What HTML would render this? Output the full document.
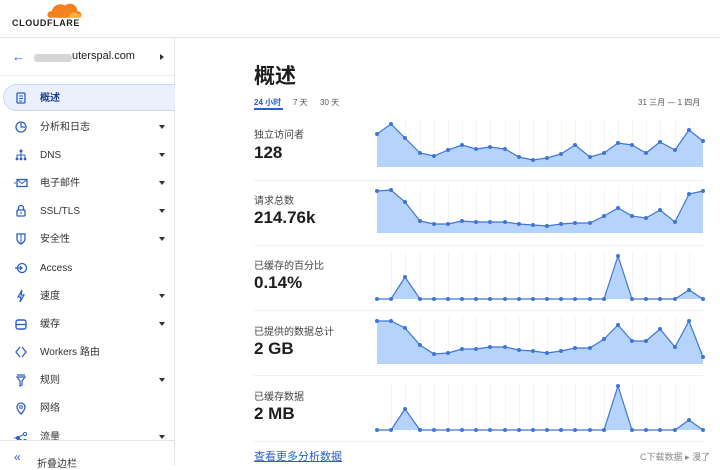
<!DOCTYPE html>
<html><head><meta charset="utf-8"><style>
*{margin:0;padding:0;box-sizing:border-box}
body{width:720px;height:466px;overflow:hidden;background:#fff;font-family:"Liberation Sans","Noto Sans CJK SC",sans-serif;color:#313131;position:relative}
.abs{position:absolute}
.side{position:absolute;left:0;top:38px;width:175px;height:428px;border-right:1px solid #e2e2e2}
.item{position:absolute;left:0;width:174px;height:26px;font-size:10px;line-height:30px;color:#333}
.item .t{position:absolute;left:40px}
.item .ic{position:absolute;left:14px;top:7px;width:14px;height:14px}
.item .ar{position:absolute;left:159px;top:12px;width:0;height:0;border-left:3.5px solid transparent;border-right:3.5px solid transparent;border-top:4px solid #333}
.lbl{position:absolute;left:254px;font-size:10px;color:#444}
.val{position:absolute;left:254px;font-size:17px;font-weight:bold;color:#1d1d1d}
</style></head><body>
<svg class="abs" style="left:44px;top:1px" width="40" height="18" viewBox="0 0 36 16"><path d="M6 15 C2 15 2 9 7 9 C8 4 14 1 19 4 C22 1 30 2 30 9 C34 9 35 15 31 15 Z" fill="#f48120"/><path d="M22 15 C22 11 27 9 30 11 C33 11 34 15 33 15Z" fill="#faad3f"/></svg>
<div class="abs" style="left:12px;top:18px;font-size:9px;font-weight:bold;letter-spacing:0.6px;color:#222">CLOUDFLARE</div>
<div class="abs" style="left:0;top:37px;width:720px;height:1px;background:#e6e6e6"></div>
<div class="side">
  <div class="abs" style="left:12px;top:11px;font-size:13px;color:#2c5ec9">←</div>
  <div class="abs" style="left:34px;top:16px;width:38px;height:8px;background:#d6d6d6;border-radius:3px"></div>
  <div class="abs" style="left:72px;top:12px;font-size:11px;color:#222">uterspal.com</div>
  <div class="abs" style="left:160px;top:16px;border-top:3px solid transparent;border-bottom:3px solid transparent;border-left:4px solid #333"></div>
  <div class="abs" style="left:0;top:37px;width:174px;height:1px;background:#ececec"></div>
</div>
<div class="abs" style="left:3px;top:84px;width:172px;height:27px;background:#eaf1fc;border:1px solid #c9d8f3;border-right:none;border-radius:14px 0 0 14px"></div>
<div class="item" style="top:84px"><svg class="ic" viewBox="0 0 14 14"><rect x="3" y="2" width="8" height="10" rx="1" fill="none" stroke="#2c5ec9" stroke-width="1.3"/><path d="M5 5h4M5 7.5h4M5 10h3" stroke="#2c5ec9"/></svg><span class="t" style="font-weight:bold;color:#1a3f8f">概述</span></div>
<div class="item" style="top:113px"><svg class="ic" viewBox="0 0 14 14"><circle cx="7" cy="7" r="5" fill="none" stroke="#2c5ec9" stroke-width="1.3"/><path d="M7 3v4h4" fill="none" stroke="#2c5ec9" stroke-width="1.3"/></svg><span class="t">分析和日志</span><span class="ar"></span></div>
<div class="item" style="top:141px"><svg class="ic" viewBox="0 0 14 14"><circle cx="7" cy="3" r="1.5" fill="#2c5ec9"/><path d="M7 4v3M3 7h8M3 7v3M7 7v3M11 7v3" stroke="#2c5ec9"/><circle cx="3" cy="11" r="1.4" fill="#2c5ec9"/><circle cx="7" cy="11" r="1.4" fill="#2c5ec9"/><circle cx="11" cy="11" r="1.4" fill="#2c5ec9"/></svg><span class="t">DNS</span><span class="ar"></span></div>
<div class="item" style="top:169px"><svg class="ic" viewBox="0 0 14 14"><rect x="3" y="3.5" width="10" height="7" fill="none" stroke="#2c5ec9" stroke-width="1.3"/><path d="M3 3.5l5 4 5-4" fill="none" stroke="#2c5ec9"/><path d="M0 7h2" stroke="#2c5ec9"/></svg><span class="t">电子邮件</span><span class="ar"></span></div>
<div class="item" style="top:197px"><svg class="ic" viewBox="0 0 14 14"><rect x="3" y="6" width="8" height="6" rx="1" fill="none" stroke="#2c5ec9" stroke-width="1.3"/><path d="M4.5 6V4a2.5 2.5 0 015 0v2" fill="none" stroke="#2c5ec9" stroke-width="1.3"/><circle cx="7" cy="9" r="0.9" fill="#2c5ec9"/></svg><span class="t">SSL/TLS</span><span class="ar"></span></div>
<div class="item" style="top:225px"><svg class="ic" viewBox="0 0 14 14"><path d="M3 2h8v5c0 3-4 5-4 5s-4-2-4-5z" fill="none" stroke="#2c5ec9" stroke-width="1.3"/><path d="M7 2v10" stroke="#2c5ec9"/></svg><span class="t">安全性</span><span class="ar"></span></div>
<div class="item" style="top:254px"><svg class="ic" viewBox="0 0 14 14"><circle cx="8" cy="7" r="4.5" fill="none" stroke="#2c5ec9" stroke-width="1.3"/><path d="M1 7h7M6 5l2 2-2 2" fill="none" stroke="#2c5ec9" stroke-width="1.2"/></svg><span class="t">Access</span></div>
<div class="item" style="top:282px"><svg class="ic" viewBox="0 0 14 14"><path d="M8 1L4 8h3l-1 5 4-7H7z" fill="none" stroke="#2c5ec9" stroke-width="1.2"/></svg><span class="t">速度</span><span class="ar"></span></div>
<div class="item" style="top:310px"><svg class="ic" viewBox="0 0 14 14"><rect x="2" y="3" width="10" height="9" rx="2" fill="none" stroke="#2c5ec9" stroke-width="1.4"/><path d="M2 7.5h10" stroke="#2c5ec9" stroke-width="1.3"/></svg><span class="t">缓存</span><span class="ar"></span></div>
<div class="item" style="top:338px"><svg class="ic" viewBox="0 0 14 14"><path d="M6 2L2 7l4 5M8 2l4 5-4 5" fill="none" stroke="#2c5ec9" stroke-width="1.3"/></svg><span class="t">Workers 路由</span></div>
<div class="item" style="top:366px"><svg class="ic" viewBox="0 0 14 14"><path d="M3 2h8M3 4h8l-3 4v4l-2 1V8z" fill="none" stroke="#2c5ec9" stroke-width="1.2"/></svg><span class="t">规则</span><span class="ar"></span></div>
<div class="item" style="top:394px"><svg class="ic" viewBox="0 0 14 14"><path d="M7 13s-4-4-4-7a4 4 0 018 0c0 3-4 7-4 7z" fill="none" stroke="#2c5ec9" stroke-width="1.3"/><circle cx="7" cy="6" r="1.4" fill="none" stroke="#2c5ec9"/></svg><span class="t">网络</span></div>
<div class="item" style="top:423px"><svg class="ic" viewBox="0 0 14 14"><circle cx="4" cy="8" r="2" fill="#2c5ec9"/><circle cx="11" cy="4" r="1.6" fill="none" stroke="#2c5ec9"/><circle cx="11" cy="11" r="1.6" fill="none" stroke="#2c5ec9"/><path d="M5 7l5-3M5 9l5 2M0 8h2" stroke="#2c5ec9"/></svg><span class="t">流量</span><span class="ar"></span></div>
<div class="abs" style="left:0;top:440px;width:174px;height:26px;background:#fff;border-top:1px solid #e6e6e6"></div>
<div class="abs" style="left:14px;top:450px;font-size:12px;color:#2c5ec9">«</div>
<div class="abs" style="left:37px;top:455px;font-size:10px;color:#333">折叠边栏</div>

<div class="abs" style="left:254px;top:60px;font-size:21px;font-weight:bold;color:#1d1d1d">概述</div>
<div class="abs" style="left:254px;top:97px;font-size:8px;color:#2c5ec9;font-weight:bold">24 小时</div>
<div class="abs" style="left:254px;top:108px;width:29px;height:1.5px;background:#2c5ec9"></div>
<div class="abs" style="left:293px;top:97px;font-size:8px;color:#555">7 天</div>
<div class="abs" style="left:320px;top:97px;font-size:8px;color:#555">30 天</div>
<div class="abs" style="left:638px;top:97px;font-size:8px;color:#555">31 三月 — 1 四月</div>

<div class="lbl" style="top:126px">独立访问者</div><div class="val" style="top:143px">128</div>
<div class="lbl" style="top:192px">请求总数</div><div class="val" style="top:208px">214.76k</div>
<div class="lbl" style="top:257px">已缓存的百分比</div><div class="val" style="top:273px">0.14%</div>
<div class="lbl" style="top:323px">已提供的数据总计</div><div class="val" style="top:339px">2 GB</div>
<div class="lbl" style="top:388px">已缓存数据</div><div class="val" style="top:404px">2 MB</div>

<svg class="abs" style="left:0;top:0" width="720" height="466">
<g stroke="#f0f0f0" stroke-width="1">
<path d="M254 180.5H703M254 245.5H703M254 310.5H703M254 375.5H703M254 441.5H703"/>
</g>
<g stroke="#f2f4f8" stroke-width="1">
<path d="M391.5 120V167M405.5 120V167M420.5 120V167M434.5 120V167M448.5 120V167M462.5 120V167M476.5 120V167M490.5 120V167M505.5 120V167M519.5 120V167M533.5 120V167M547.5 120V167M561.5 120V167M575.5 120V167M590.5 120V167M604.5 120V167M618.5 120V167M632.5 120V167M646.5 120V167M660.5 120V167M675.5 120V167M689.5 120V167"/>
<path d="M391.5 186V233M405.5 186V233M420.5 186V233M434.5 186V233M448.5 186V233M462.5 186V233M476.5 186V233M490.5 186V233M505.5 186V233M519.5 186V233M533.5 186V233M547.5 186V233M561.5 186V233M575.5 186V233M590.5 186V233M604.5 186V233M618.5 186V233M632.5 186V233M646.5 186V233M660.5 186V233M675.5 186V233M689.5 186V233"/>
<path d="M391.5 252V299M405.5 252V299M420.5 252V299M434.5 252V299M448.5 252V299M462.5 252V299M476.5 252V299M490.5 252V299M505.5 252V299M519.5 252V299M533.5 252V299M547.5 252V299M561.5 252V299M575.5 252V299M590.5 252V299M604.5 252V299M618.5 252V299M632.5 252V299M646.5 252V299M660.5 252V299M675.5 252V299M689.5 252V299"/>
<path d="M391.5 317V364M405.5 317V364M420.5 317V364M434.5 317V364M448.5 317V364M462.5 317V364M476.5 317V364M490.5 317V364M505.5 317V364M519.5 317V364M533.5 317V364M547.5 317V364M561.5 317V364M575.5 317V364M590.5 317V364M604.5 317V364M618.5 317V364M632.5 317V364M646.5 317V364M660.5 317V364M675.5 317V364M689.5 317V364"/>
<path d="M391.5 383V430M405.5 383V430M420.5 383V430M434.5 383V430M448.5 383V430M462.5 383V430M476.5 383V430M490.5 383V430M505.5 383V430M519.5 383V430M533.5 383V430M547.5 383V430M561.5 383V430M575.5 383V430M590.5 383V430M604.5 383V430M618.5 383V430M632.5 383V430M646.5 383V430M660.5 383V430M675.5 383V430M689.5 383V430"/>
</g>
<g fill="#b5d3fb" stroke="#3f76d6" stroke-width="1.2">
<polygon stroke="none" points="377,167 377,134 391,124 405,138 420,153 434,156 448,150 462,145 476,149 490,147 505,149 519,157 533,160 547,158 561,154 575,145 590,157 604,153 618,143 632,145 646,153 660,142 675,150 689,130 703,141 703,167"/>
<polyline fill="none" points="377,134 391,124 405,138 420,153 434,156 448,150 462,145 476,149 490,147 505,149 519,157 533,160 547,158 561,154 575,145 590,157 604,153 618,143 632,145 646,153 660,142 675,150 689,130 703,141"/>
<polygon stroke="none" points="377,233 377,191 391,190 405,202 420,221 434,224 448,224 462,221 476,222 490,222 505,222 519,224 533,225 547,226 561,224 575,223 590,223 604,216 618,208 632,216 646,218 660,210 675,222 689,194 703,191 703,233"/>
<polyline fill="none" points="377,191 391,190 405,202 420,221 434,224 448,224 462,221 476,222 490,222 505,222 519,224 533,225 547,226 561,224 575,223 590,223 604,216 618,208 632,216 646,218 660,210 675,222 689,194 703,191"/>
<polygon stroke="none" points="377,299 391,299 405,277 420,299 604,299 618,256 632,299 675,299 689,290 703,299"/>
<polyline fill="none" points="377,299 391,299 405,277 420,299 434,299 448,299 462,299 476,299 490,299 505,299 519,299 533,299 547,299 561,299 575,299 590,299 604,299 618,256 632,299 646,299 660,299 675,299 689,290 703,299"/>
<polygon stroke="none" points="377,364 377,321 391,321 405,328 420,345 434,354 448,353 462,349 476,349 490,347 505,347 519,350 533,351 547,353 561,351 575,348 590,348 604,339 618,325 632,341 646,341 660,329 675,347 689,321 703,357 703,364"/>
<polyline fill="none" points="377,321 391,321 405,328 420,345 434,354 448,353 462,349 476,349 490,347 505,347 519,350 533,351 547,353 561,351 575,348 590,348 604,339 618,325 632,341 646,341 660,329 675,347 689,321 703,357"/>
<polygon stroke="none" points="377,430 391,430 405,409 420,430 604,430 618,386 632,430 675,430 689,420 703,430"/>
<polyline fill="none" points="377,430 391,430 405,409 420,430 434,430 448,430 462,430 476,430 490,430 505,430 519,430 533,430 547,430 561,430 575,430 590,430 604,430 618,386 632,430 646,430 660,430 675,430 689,420 703,430"/>
</g>
<g fill="#3f76d6">
<circle cx="377" cy="134" r="2"/><circle cx="391" cy="124" r="2"/><circle cx="405" cy="138" r="2"/><circle cx="420" cy="153" r="2"/><circle cx="434" cy="156" r="2"/><circle cx="448" cy="150" r="2"/><circle cx="462" cy="145" r="2"/><circle cx="476" cy="149" r="2"/><circle cx="490" cy="147" r="2"/><circle cx="505" cy="149" r="2"/><circle cx="519" cy="157" r="2"/><circle cx="533" cy="160" r="2"/><circle cx="547" cy="158" r="2"/><circle cx="561" cy="154" r="2"/><circle cx="575" cy="145" r="2"/><circle cx="590" cy="157" r="2"/><circle cx="604" cy="153" r="2"/><circle cx="618" cy="143" r="2"/><circle cx="632" cy="145" r="2"/><circle cx="646" cy="153" r="2"/><circle cx="660" cy="142" r="2"/><circle cx="675" cy="150" r="2"/><circle cx="689" cy="130" r="2"/><circle cx="703" cy="141" r="2"/>
<circle cx="377" cy="191" r="2"/><circle cx="391" cy="190" r="2"/><circle cx="405" cy="202" r="2"/><circle cx="420" cy="221" r="2"/><circle cx="434" cy="224" r="2"/><circle cx="448" cy="224" r="2"/><circle cx="462" cy="221" r="2"/><circle cx="476" cy="222" r="2"/><circle cx="490" cy="222" r="2"/><circle cx="505" cy="222" r="2"/><circle cx="519" cy="224" r="2"/><circle cx="533" cy="225" r="2"/><circle cx="547" cy="226" r="2"/><circle cx="561" cy="224" r="2"/><circle cx="575" cy="223" r="2"/><circle cx="590" cy="223" r="2"/><circle cx="604" cy="216" r="2"/><circle cx="618" cy="208" r="2"/><circle cx="632" cy="216" r="2"/><circle cx="646" cy="218" r="2"/><circle cx="660" cy="210" r="2"/><circle cx="675" cy="222" r="2"/><circle cx="689" cy="194" r="2"/><circle cx="703" cy="191" r="2"/>
<circle cx="377" cy="321" r="2"/><circle cx="391" cy="321" r="2"/><circle cx="405" cy="328" r="2"/><circle cx="420" cy="345" r="2"/><circle cx="434" cy="354" r="2"/><circle cx="448" cy="353" r="2"/><circle cx="462" cy="349" r="2"/><circle cx="476" cy="349" r="2"/><circle cx="490" cy="347" r="2"/><circle cx="505" cy="347" r="2"/><circle cx="519" cy="350" r="2"/><circle cx="533" cy="351" r="2"/><circle cx="547" cy="353" r="2"/><circle cx="561" cy="351" r="2"/><circle cx="575" cy="348" r="2"/><circle cx="590" cy="348" r="2"/><circle cx="604" cy="339" r="2"/><circle cx="618" cy="325" r="2"/><circle cx="632" cy="341" r="2"/><circle cx="646" cy="341" r="2"/><circle cx="660" cy="329" r="2"/><circle cx="675" cy="347" r="2"/><circle cx="689" cy="321" r="2"/><circle cx="703" cy="357" r="2"/>
<circle cx="377" cy="299" r="2"/><circle cx="391" cy="299" r="2"/><circle cx="405" cy="277" r="2"/><circle cx="420" cy="299" r="2"/><circle cx="434" cy="299" r="2"/><circle cx="448" cy="299" r="2"/><circle cx="462" cy="299" r="2"/><circle cx="476" cy="299" r="2"/><circle cx="490" cy="299" r="2"/><circle cx="505" cy="299" r="2"/><circle cx="519" cy="299" r="2"/><circle cx="533" cy="299" r="2"/><circle cx="547" cy="299" r="2"/><circle cx="561" cy="299" r="2"/><circle cx="575" cy="299" r="2"/><circle cx="590" cy="299" r="2"/><circle cx="604" cy="299" r="2"/><circle cx="618" cy="256" r="2"/><circle cx="632" cy="299" r="2"/><circle cx="646" cy="299" r="2"/><circle cx="660" cy="299" r="2"/><circle cx="675" cy="299" r="2"/><circle cx="689" cy="290" r="2"/><circle cx="703" cy="299" r="2"/>
<circle cx="377" cy="430" r="2"/><circle cx="391" cy="430" r="2"/><circle cx="405" cy="409" r="2"/><circle cx="420" cy="430" r="2"/><circle cx="434" cy="430" r="2"/><circle cx="448" cy="430" r="2"/><circle cx="462" cy="430" r="2"/><circle cx="476" cy="430" r="2"/><circle cx="490" cy="430" r="2"/><circle cx="505" cy="430" r="2"/><circle cx="519" cy="430" r="2"/><circle cx="533" cy="430" r="2"/><circle cx="547" cy="430" r="2"/><circle cx="561" cy="430" r="2"/><circle cx="575" cy="430" r="2"/><circle cx="590" cy="430" r="2"/><circle cx="604" cy="430" r="2"/><circle cx="618" cy="386" r="2"/><circle cx="632" cy="430" r="2"/><circle cx="646" cy="430" r="2"/><circle cx="660" cy="430" r="2"/><circle cx="675" cy="430" r="2"/><circle cx="689" cy="420" r="2"/><circle cx="703" cy="430" r="2"/>
</g>
</svg>
<div class="abs" style="left:254px;top:448px;font-size:11px;color:#2c5ec9;text-decoration:underline">查看更多分析数据</div>
<div class="abs" style="left:640px;top:450px;font-size:9px;color:#888">C下载数据 ▸ 漫了</div>
</body></html>
